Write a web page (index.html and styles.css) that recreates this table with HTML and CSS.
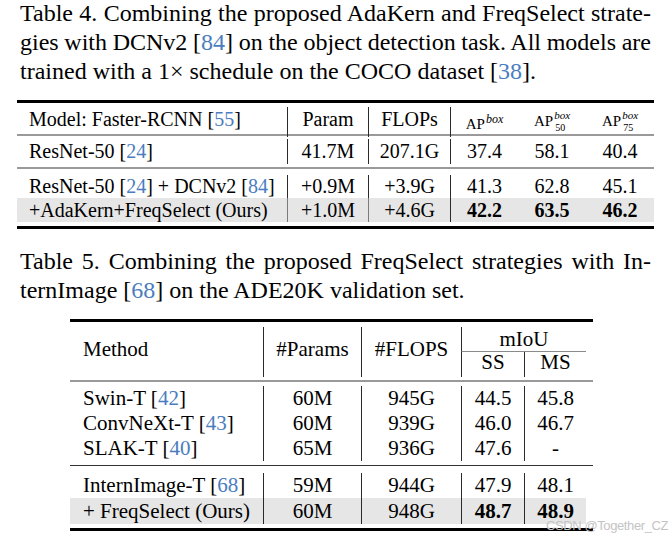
FILE: index.html
```html
<!DOCTYPE html>
<html>
<head>
<meta charset="utf-8">
<link rel="stylesheet" href="styles.css">
</head>
<body>
<div class="page">
  <div class="caption cap4">
    <div class="ln j">Table 4. Combining the proposed AdaKern and FreqSelect strate-</div>
    <div class="ln j">gies with DCNv2 [<span class="cite">84</span>] on the object detection task. All models are</div>
    <div class="ln">trained with a 1× schedule on the COCO dataset [<span class="cite">38</span>].</div>
  </div>

  <div class="t4">
    <div class="rule-top"></div>
    <div class="row hd">
      <div class="cell l">Model: Faster-RCNN [<span class="cite">55</span>]</div>
      <div class="cell b">Param</div>
      <div class="cell b">FLOPs</div>
      <div class="cell b"><span class="ap">AP<span class="sup">box</span></span></div>
      <div class="cell"><span class="ap">AP<span class="stack"><span class="s1">box</span><span class="s2">50</span></span></span></div>
      <div class="cell"><span class="ap">AP<span class="stack"><span class="s1">box</span><span class="s2">75</span></span></span></div>
    </div>
    <div class="rule-mid m1"></div>
    <div class="row r25">
      <div class="cell l">ResNet-50 [<span class="cite">24</span>]</div>
      <div class="cell b">41.7M</div>
      <div class="cell b">207.1G</div>
      <div class="cell b">37.4</div>
      <div class="cell">58.1</div>
      <div class="cell">40.4</div>
    </div>
    <div class="rule-mid m2"></div>
    <div class="row r23">
      <div class="cell l">ResNet-50 [<span class="cite">24</span>] + DCNv2 [<span class="cite">84</span>]</div>
      <div class="cell b">+0.9M</div>
      <div class="cell b">+3.9G</div>
      <div class="cell b">41.3</div>
      <div class="cell">62.8</div>
      <div class="cell">45.1</div>
    </div>
    <div class="row r24 hl">
      <div class="cell l">+AdaKern+FreqSelect (Ours)</div>
      <div class="cell b lb">+1.0M</div>
      <div class="cell b lb">+4.6G</div>
      <div class="cell b"><strong>42.2</strong></div>
      <div class="cell"><strong>63.5</strong></div>
      <div class="cell"><strong>46.2</strong></div>
    </div>
    <div class="rule-bot"></div>
  </div>

  <div class="caption cap5">
    <div class="ln j">Table 5. Combining the proposed FreqSelect strategies with In-</div>
    <div class="ln">ternImage [<span class="cite">68</span>] on the ADE20K validation set.</div>
  </div>

  <div class="t5">
    <div class="rule-top"></div>
    <div class="hd5">
      <div class="hc left">Method</div>
      <div class="hc b">#Params</div>
      <div class="hc b">#FLOPS</div>
      <div class="miou b">mIoU</div>
      <div class="sub ss b">SS</div>
      <div class="sub ms b">MS</div>
      <div class="hpad"></div>
    </div>
    <div class="rule-mid m3"></div>
    <div class="row5">
      <div class="cell l">Swin-T [<span class="cite">42</span>]</div>
      <div class="cell b">60M</div>
      <div class="cell b">945G</div>
      <div class="cell b">44.5</div>
      <div class="cell b">45.8</div>
      <div class="cell pad"></div>
    </div>
    <div class="row5">
      <div class="cell l">ConvNeXt-T [<span class="cite">43</span>]</div>
      <div class="cell b">60M</div>
      <div class="cell b">939G</div>
      <div class="cell b">46.0</div>
      <div class="cell b">46.7</div>
      <div class="cell pad"></div>
    </div>
    <div class="row5">
      <div class="cell l">SLAK-T [<span class="cite">40</span>]</div>
      <div class="cell b">65M</div>
      <div class="cell b">936G</div>
      <div class="cell b">47.6</div>
      <div class="cell b">-</div>
      <div class="cell pad"></div>
    </div>
    <div class="rule-thin"></div>
    <div class="row5">
      <div class="cell l">InternImage-T [<span class="cite">68</span>]</div>
      <div class="cell b">59M</div>
      <div class="cell b">944G</div>
      <div class="cell b">47.9</div>
      <div class="cell b">48.1</div>
      <div class="cell pad"></div>
    </div>
    <div class="row5 hl5">
      <div class="cell l">+ FreqSelect (Ours)</div>
      <div class="cell b">60M</div>
      <div class="cell b">948G</div>
      <div class="cell b"><strong>48.7</strong></div>
      <div class="cell b"><strong>48.9</strong></div>
      <div class="cell pad"></div>
    </div>
    <div class="rule-bot b5"></div>
  </div>

  <div class="watermark">CSDN @Together_CZ</div>
</div>
</body>
</html>
```

FILE: styles.css
```css
html, body {
  margin: 0;
  padding: 0;
  background: #ffffff;
}

body {
  font-family: "Liberation Serif", "Times New Roman", serif;
  color: #000000;
}

.page {
  position: relative;
  width: 672px;
  height: 538px;
  overflow: hidden;
}

.caption {
  margin: 0 21px 0 20px;
  font-size: 24px;
  line-height: 29px;
}

.cap4 {
  margin-top: -1px;
}

.cap5 {
  margin-top: 18px;
}

.ln.j {
  text-align: justify;
  text-align-last: justify;
  word-spacing: -1px;
}

.cite {
  color: #4a7dc0;
}

/* Table 4 */
.t4 {
  margin: 14px 0 0 17px;
  width: 637px;
}

.rule-top,
.rule-bot {
  height: 3px;
  background: #000000;
}

.rule-mid {
  height: 2px;
  background: #9a9a9a;
}

.m1 {
  margin: 2px 0 3px;
}

.m2 {
  margin: 3px 0 6px;
}

.rule-bot {
  margin-top: 4px;
}

.t4 .row {
  display: grid;
  grid-template-columns: 270px 81px 82px 68px 68px 68px;
  font-size: 20px;
  white-space: nowrap;
}

.t4 .hd {
  margin-top: 4px;
  height: 25px;
  line-height: 25px;
}

.t4 .r25 {
  height: 25px;
  line-height: 25px;
}

.t4 .r23 {
  height: 23px;
  line-height: 23px;
}

.t4 .r24 {
  height: 24px;
  line-height: 24px;
}

.cell {
  text-align: center;
}

.cell.l {
  text-align: left;
}

.t4 .cell.l {
  padding-left: 12px;
}

.b {
  border-left: 1px solid #2a2a2a;
}

.lb {
  border-left-color: #7a7a7a;
}

.hl {
  background: #e6e6e6;
}

strong {
  font-weight: bold;
}

.ap {
  font-size: 15px;
}

.sup {
  font-style: italic;
  font-size: 12px;
  vertical-align: 6px;
  margin-left: 1px;
}

.stack {
  display: inline-flex;
  flex-direction: column;
  align-items: flex-start;
  vertical-align: 7px;
  margin-left: 1px;
}

.s1 {
  font-style: italic;
  font-size: 11px;
  line-height: 11px;
}

.s2 {
  padding-left: 1px;
  font-size: 10px;
  line-height: 10px;
  margin-top: 2px;
}

/* Table 5 */
.t5 {
  margin: 14px 0 0 70px;
  width: 523px;
}

.hd5 {
  display: grid;
  grid-template-columns: 193px 98px 100px 63px 62px 7px;
  grid-template-rows: 25px 25px;
  margin-top: 5px;
  font-size: 21px;
}

.hc {
  grid-row: 1 / 3;
  display: flex;
  align-items: center;
  justify-content: center;
  padding-bottom: 5px;
  line-height: 25px;
}

.hc.left {
  justify-content: flex-start;
  padding-left: 13px;
}

.miou {
  grid-column: 4 / 6;
  grid-row: 1;
  box-sizing: border-box;
  border-bottom: 1px solid #8a8a8a;
  line-height: 24px;
  text-align: center;
}

.sub {
  grid-row: 2;
  line-height: 20px;
  padding-bottom: 5px;
  text-align: center;
}

.ss {
  grid-column: 4;
}

.ms {
  grid-column: 5;
}

.hpad {
  grid-column: 6;
  grid-row: 1 / 3;
}

.m3 {
  margin: 3px 0 4px;
}

.rule-thin {
  height: 1px;
  background: #333333;
  margin: 4px 0 7px;
}

.row5 {
  display: grid;
  grid-template-columns: 193px 98px 100px 63px 62px 7px;
  font-size: 21px;
  height: 25px;
  line-height: 25px;
  white-space: nowrap;
}

.row5 .cell.l {
  padding-left: 13px;
}

.row5.hl5 {
  height: 26px;
  line-height: 26px;
}

.hl5 .cell {
  background: #e6e6e6;
}

.hl5 .cell.pad {
  background: transparent;
}

.b5 {
  margin-top: 4px;
}

.watermark {
  position: absolute;
  right: 4px;
  top: 519px;
  font-family: "Liberation Sans", Arial, sans-serif;
  font-size: 13px;
  letter-spacing: -0.4px;
  color: #c4c4c4;
  line-height: 13px;
}
```
